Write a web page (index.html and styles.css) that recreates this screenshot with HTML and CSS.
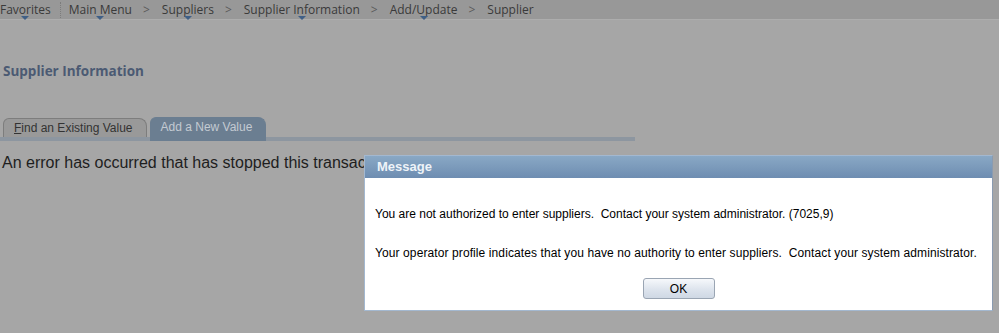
FILE: index.html
```html
<!DOCTYPE html>
<html lang="en">
<head>
  <meta charset="UTF-8">
  <title>Supplier Information</title>
  <link rel="stylesheet" href="styles.css">
</head>
<body>
  <div class="page">
    <nav class="crumbs">
      <span class="crumb menu">Favorites</span>
      <span class="divider"></span>
      <span class="crumb menu">Main Menu</span>
      <span class="sep">&gt;</span>
      <span class="crumb menu">Suppliers</span>
      <span class="sep">&gt;</span>
      <span class="crumb menu">Supplier Information</span>
      <span class="sep">&gt;</span>
      <span class="crumb menu">Add/Update</span>
      <span class="sep">&gt;</span>
      <span class="crumb">Supplier</span>
    </nav>

    <h1 class="page-title">Supplier Information</h1>

    <div class="tabs">
      <div class="tab"><u>F</u>ind an Existing Value</div>
      <div class="tab active">Add a New Value</div>
    </div>

    <p class="error">An error has occurred that has stopped this transaction.</p>
  </div>

  <div class="modal">
    <div class="modal-head">Message</div>
    <div class="modal-body">
      <p>You are not authorized to enter suppliers.&nbsp; Contact your system administrator. (7025,9)</p>
      <p class="msg-long">Your operator profile indicates that you have no authority to enter suppliers.&nbsp; Contact your system administrator.</p>
      <div class="modal-actions">
        <button class="btn">OK</button>
      </div>
    </div>
  </div>
</body>
</html>
```

FILE: styles.css
```css
* {
  box-sizing: border-box;
  margin: 0;
  padding: 0;
}

body {
  width: 999px;
  height: 333px;
  overflow: hidden;
  background-color: #a6a6a6;
  font-family: "Liberation Sans", Arial, sans-serif;
  position: relative;
}

/* breadcrumb bar */
.crumbs {
  display: flex;
  align-items: center;
  height: 20px;
  background-color: #989898;
  border-bottom: 1px solid #adadad;
  font-family: "Open Sans", sans-serif;
  font-size: 12px;
  color: #3a3a3a;
  white-space: nowrap;
}

.crumb {
  position: relative;
  line-height: 20px;
}

.crumb.menu::after {
  content: "";
  position: absolute;
  left: 50%;
  bottom: 0;
  margin-left: -4px;
  border-left: 4px solid transparent;
  border-right: 4px solid transparent;
  border-top: 4px solid #3f5f86;
}

.divider {
  width: 0;
  height: 16px;
  margin: 0 8px 0 9px;
  border-left: 1px dotted #7c7c7c;
}

.sep {
  margin: 0 12px 0 11px;
  color: #5a5a5a;
}

.sep:last-of-type {
  margin-right: 14px;
}

.page-title {
  margin: 42px 0 0 3px;
  font-family: "Open Sans", sans-serif;
  font-size: 13.5px;
  font-weight: 700;
  color: #4b5a73;
}

/* tabs */
.tabs {
  display: flex;
  align-items: flex-end;
  gap: 3px;
  width: 635px;
  margin-top: 37px;
  padding-left: 3px;
  border-bottom: 4px solid #8d96a0;
}

.tab {
  height: 19px;
  padding: 0 13px 0 10px;
  font-size: 12px;
  line-height: 19px;
  color: #333;
  background-color: #999;
  border: 1px solid #7d7d7d;
  border-bottom: none;
  border-radius: 6px 8px 0 0;
}

.tab.active {
  height: 24px;
  margin-bottom: -4px;
  padding-bottom: 4px;
  background-color: #6b7e91;
  border-color: #6b7e91;
  color: #c3cad2;
}

.error {
  margin: 13px 0 0 2px;
  font-size: 16px;
  color: #1e1e1e;
  white-space: nowrap;
}

/* message dialog */
.modal {
  position: absolute;
  left: 364px;
  top: 155px;
  width: 629px;
  height: 156px;
  background-color: #fff;
  border: 1px solid #a3b8d0;
  border-right-color: #8a9bb0;
}

.modal-head {
  height: 22px;
  padding-left: 12px;
  line-height: 22px;
  font-size: 13px;
  font-weight: 700;
  color: #eef3f8;
  background: linear-gradient(#89a8c5, #6e8db1);
}

.modal-body {
  padding: 29px 10px 0 10px;
  font-size: 12px;
  color: #000;
}

.modal-body p {
  line-height: 14px;
  margin-bottom: 25px;
  white-space: nowrap;
}

.msg-long {
  letter-spacing: 0.1px;
}

.modal-actions {
  display: flex;
  justify-content: center;
  margin-top: -7px;
}

.btn {
  width: 72px;
  height: 21px;
  font-family: "Liberation Sans", Arial, sans-serif;
  font-size: 12px;
  color: #000;
  background: linear-gradient(#f6f8fb, #dde4ed 55%, #cfd8e4);
  border: 1px solid #9aa5b3;
  border-radius: 3px;
}
```
